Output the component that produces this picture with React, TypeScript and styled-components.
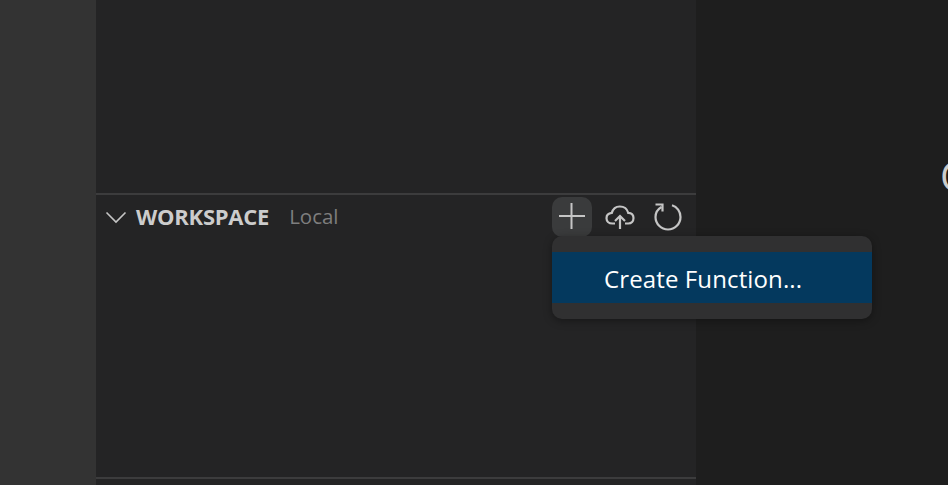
import React from "react";
import styled, { createGlobalStyle } from "styled-components";

const GlobalStyle = createGlobalStyle`
  html, body {
    margin: 0;
    padding: 0;
    height: 100%;
    background: #1e1e1e;
    font-family: "Open Sans", "Noto Sans", sans-serif;
  }
  #root {
    height: 100%;
  }
`;

const Shell = styled.div`
  display: flex;
  width: 948px;
  height: 485px;
  overflow: hidden;
`;

const ActivityBar = styled.div`
  width: 96px;
  flex-shrink: 0;
  background: #333333;
`;

const Sidebar = styled.div`
  position: relative;
  width: 600px;
  flex-shrink: 0;
  background: #242425;
  display: flex;
  flex-direction: column;
`;

const TopPane = styled.div`
  height: 193px;
  flex-shrink: 0;
`;

const PaneHeader = styled.div`
  height: 44px;
  flex-shrink: 0;
  border-top: 2px solid #3c3c3d;
  display: flex;
  align-items: center;
  padding: 0 8px 0 8px;
`;

const Chevron = styled.svg`
  width: 24px;
  height: 24px;
  margin-right: 8px;
  flex-shrink: 0;
`;

const Title = styled.span`
  font-size: 22px;
  font-weight: 700;
  color: #cccccc;
  letter-spacing: -0.25px;
  margin-bottom: 2px;
`;

const Badge = styled.span`
  margin-left: 20px;
  font-size: 20.5px;
  color: #7e7e7e;
  margin-bottom: 2px;
`;

const Actions = styled.div`
  margin-left: auto;
  display: flex;
  align-items: center;
  gap: 8px;
`;

const ActionButton = styled.div<{ $active?: boolean }>`
  width: 40px;
  height: 40px;
  border-radius: 10px;
  background: ${({ $active }) => ($active ? "#3a3b3c" : "transparent")};
  display: flex;
  align-items: center;
  justify-content: center;
`;

const Icon = styled.svg`
  width: 32px;
  height: 32px;
`;

const BodyPane = styled.div`
  height: 238px;
  flex-shrink: 0;
`;

const BottomHeader = styled.div`
  border-top: 2px solid #3c3c3d;
  flex: 1;
`;

const Menu = styled.div`
  position: absolute;
  left: 456px;
  top: 236px;
  width: 320px;
  box-sizing: border-box;
  padding: 16px 0;
  background: #303031;
  border-radius: 10px;
  box-shadow: 0 2px 8px rgba(0, 0, 0, 0.36);
  z-index: 2;
`;

const MenuItem = styled.div`
  height: 51px;
  background: #04395e;
  color: #ffffff;
  font-size: 24px;
  line-height: 53px;
  padding-left: 52px;
  letter-spacing: 0.12px;
`;

const Editor = styled.div`
  flex: 1;
  background: #1e1e1e;
  overflow: hidden;
  position: relative;
`;

const Watermark = styled.span`
  position: absolute;
  left: 244px;
  top: 149px;
  font-size: 40px;
  line-height: 54px;
  color: #cccccc;
`;

export default function App() {
  return (
    <Shell>
      <GlobalStyle />
      <ActivityBar />
      <Sidebar>
        <TopPane />
        <PaneHeader>
          <Chevron viewBox="0 0 24 24" fill="none" stroke="#c5c5c5" strokeWidth="1.6">
            <path d="M2.5 7.5 12 17l9.5-9.5" />
          </Chevron>
          <Title>WORKSPACE</Title>
          <Badge>Local</Badge>
          <Actions>
            <ActionButton $active>
              <Icon viewBox="0 0 32 32" fill="none" stroke="#c5c5c5" strokeWidth="2">
                <path d="M3 15h26M15.500 2v26" />
              </Icon>
            </ActionButton>
            <ActionButton>
              <Icon viewBox="0 0 32 32" fill="none" stroke="#c5c5c5" strokeWidth="2.2">
                <path d="M11 22.500H8.500C4.500 22.500 2.500 20 2.500 17.200c0-3 2.300-5 5.300-5.300C8.800 8.300 11.800 5.500 15.800 5.500c4.300 0 7.400 2.700 8.400 6.300 3.400.1 5.300 2.400 5.300 5.300 0 3-2 5.400-5.300 5.400H21" />
                <path d="M16 28V15M11 20l5-5 5 5" />
              </Icon>
            </ActionButton>
            <ActionButton>
              <Icon viewBox="0 0 32 32" fill="none" stroke="#c5c5c5" strokeWidth="2.2">
                <path d="M9.500 6C5.600 8.300 3.500 12 3.500 16 3.500 22.900 9.100 28.500 16 28.500S28.500 22.900 28.500 16C28.500 10.500 25 5.800 20 4.200" />
                <path d="M3.500 3.500h7v7" />
              </Icon>
            </ActionButton>
          </Actions>
        </PaneHeader>
        <BodyPane />
        <BottomHeader />
        <Menu>
          <MenuItem>Create Function...</MenuItem>
        </Menu>
      </Sidebar>
      <Editor>
        <Watermark>O</Watermark>
      </Editor>
    </Shell>
  );
}
